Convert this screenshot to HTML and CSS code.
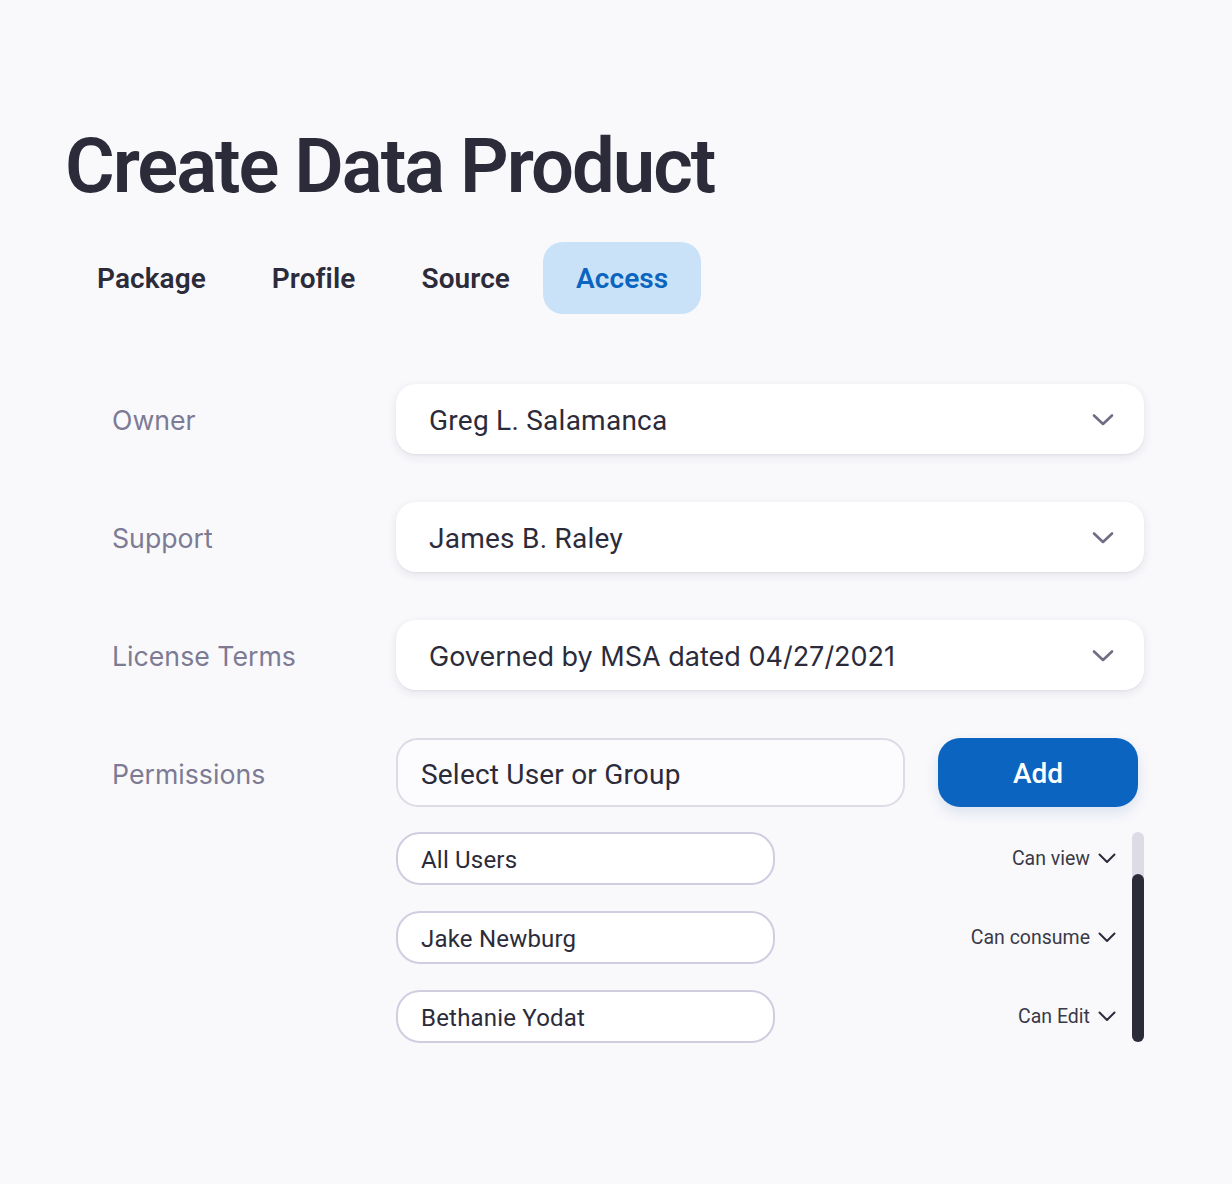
FILE: index.html
```html
<!DOCTYPE html>
<html lang="en">
<head>
<meta charset="utf-8">
<title>Create Data Product</title>
<link rel="stylesheet" href="styles.css">
</head>
<body>
<main class="page">
  <h1 class="title">Create Data Product</h1>
  <nav class="tabs">
    <span class="tab">Package</span>
    <span class="tab">Profile</span>
    <span class="tab">Source</span>
    <span class="tab active">Access</span>
  </nav>
  <section class="form">
    <div class="label">Owner</div>
    <div class="select">
      <span class="select-text">Greg L. Salamanca</span>
      <svg class="chev" width="22" height="14" viewBox="0 0 22 14"><path d="M2 2.5 L11 11 L20 2.5" fill="none" stroke="#6f6d85" stroke-width="2.6" stroke-linecap="round" stroke-linejoin="round"/></svg>
    </div>

    <div class="label">Support</div>
    <div class="select">
      <span class="select-text">James B. Raley</span>
      <svg class="chev" width="22" height="14" viewBox="0 0 22 14"><path d="M2 2.5 L11 11 L20 2.5" fill="none" stroke="#6f6d85" stroke-width="2.6" stroke-linecap="round" stroke-linejoin="round"/></svg>
    </div>

    <div class="label">License Terms</div>
    <div class="select">
      <span class="select-text inter">Governed by MSA dated 04/27/2021</span>
      <svg class="chev" width="22" height="14" viewBox="0 0 22 14"><path d="M2 2.5 L11 11 L20 2.5" fill="none" stroke="#6f6d85" stroke-width="2.6" stroke-linecap="round" stroke-linejoin="round"/></svg>
    </div>

    <div class="label">Permissions</div>
    <div class="perms">
      <div class="perm-top">
        <div class="search">Select User or Group</div>
        <button class="add">Add</button>
      </div>
      <div class="perm-list">
        <div class="rows">
          <div class="row">
            <div class="pill">All Users</div>
            <div class="role">Can view
              <svg width="18" height="11" viewBox="0 0 18 11"><path d="M1.5 1.5 L9 9 L16.5 1.5" fill="none" stroke="#2c2b3a" stroke-width="2" stroke-linecap="round" stroke-linejoin="round"/></svg>
            </div>
          </div>
          <div class="row">
            <div class="pill">Jake Newburg</div>
            <div class="role">Can consume
              <svg width="18" height="11" viewBox="0 0 18 11"><path d="M1.5 1.5 L9 9 L16.5 1.5" fill="none" stroke="#2c2b3a" stroke-width="2" stroke-linecap="round" stroke-linejoin="round"/></svg>
            </div>
          </div>
          <div class="row">
            <div class="pill">Bethanie Yodat</div>
            <div class="role">Can Edit
              <svg width="18" height="11" viewBox="0 0 18 11"><path d="M1.5 1.5 L9 9 L16.5 1.5" fill="none" stroke="#2c2b3a" stroke-width="2" stroke-linecap="round" stroke-linejoin="round"/></svg>
            </div>
          </div>
        </div>
        <div class="scrollbar"><div class="thumb"></div></div>
      </div>
    </div>
  </section>
</main>
</body>
</html>
```
FILE: styles.css
```css
* { box-sizing: border-box; }
html, body { margin: 0; padding: 0; }
body {
  background: #f9f9fc;
  font-family: Roboto, "Liberation Sans", sans-serif;
  color: #2c2b3a;
  width: 1232px;
  height: 1184px;
  overflow: hidden;
}
.page {
  padding: 128px 88px 0 64px;
}
.title {
  margin: 0 0 0 1px;
  font-size: 76px;
  line-height: 76px;
  font-weight: 600;
  color: #2c2b3a;
  letter-spacing: -2px;
}
.tabs {
  display: flex;
  margin-top: 38px;
}
.tab {
  height: 72px;
  padding: 0 33px;
  display: flex;
  align-items: center;
  font-size: 28px;
  font-weight: 600;
  letter-spacing: 0.08px;
  color: #2c2b3a;
  border-radius: 20px;
}
.tab.active {
  background: #c9e2f7;
  color: #0a64c0;
}
.form {
  margin: 70px 0 0 48px;
  display: grid;
  grid-template-columns: 284px 1fr;
  row-gap: 48px;
  align-items: start;
}
.label {
  font-family: Inter, "Noto Sans", sans-serif;
  font-size: 26.7px;
  color: #7d7b94;
  height: 70px;
  display: flex;
  align-items: center;
  padding-top: 2px;
}
.select {
  height: 70px;
  background: #ffffff;
  border-radius: 20px;
  box-shadow: 0 3px 10px rgba(40, 38, 80, 0.10), 0 1px 2px rgba(40, 38, 80, 0.05);
  display: flex;
  align-items: center;
  justify-content: space-between;
  padding: 2px 30px 0 33px;
}
.select-text {
  font-size: 28px;
  letter-spacing: 0.25px;
  color: #2c2b3a;
}
.select-text.inter {
  font-family: Inter, "Noto Sans", sans-serif;
  font-size: 27px;
  letter-spacing: 0;
}
.perms {
  display: flex;
  flex-direction: column;
  gap: 25px;
}
.perm-top {
  display: flex;
  gap: 33px;
}
.search {
  width: 509px;
  height: 69px;
  background: #fcfcff;
  border: 2px solid #dcdbe6;
  border-radius: 22px;
  display: flex;
  align-items: center;
  padding: 3px 0 0 23px;
  font-size: 28px;
  letter-spacing: 0.2px;
  color: #2c2b3a;
}
.add {
  width: 200px;
  height: 69px;
  border: none;
  border-radius: 22px;
  background: #0a64c0;
  color: #ffffff;
  font-family: Roboto, "Liberation Sans", sans-serif;
  font-size: 28px;
  font-weight: 500;
  padding-top: 3px;
  box-shadow: 0 6px 14px rgba(10, 60, 130, 0.12);
}
.perm-list {
  display: flex;
  gap: 16px;
}
.rows {
  flex: 1;
  display: flex;
  flex-direction: column;
  gap: 26px;
}
.row {
  display: flex;
  align-items: center;
  justify-content: space-between;
}
.pill {
  width: 379px;
  height: 53px;
  border: 2px solid #cfcde0;
  border-radius: 24px;
  background: #ffffff;
  display: flex;
  align-items: center;
  padding: 2px 0 0 23px;
  font-size: 24px;
  letter-spacing: 0.2px;
  color: #2c2b3a;
}
.role {
  display: flex;
  align-items: center;
  gap: 8px;
  font-size: 19.5px;
  color: #3a3947;
}
.scrollbar {
  width: 12px;
  height: 210px;
  background: #dcdbe6;
  border-radius: 6px;
  display: flex;
  flex-direction: column;
  justify-content: flex-end;
}
.thumb {
  height: 168px;
  background: #2c2b3a;
  border-radius: 6px;
}
```
